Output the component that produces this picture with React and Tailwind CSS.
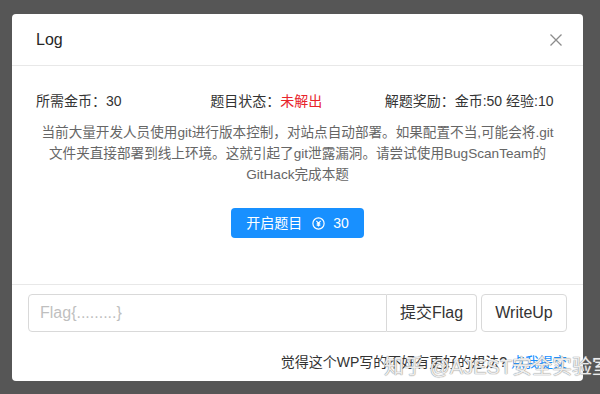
import { useState } from 'react';

const FONT = "font-['Liberation_Sans','Noto_Sans_CJK_SC',sans-serif]";

function CloseIcon() {
  return (
    <svg width="12" height="12" viewBox="0 0 12 12" fill="none">
      <path d="M0.5 0.5L11.5 11.5M11.5 0.5L0.5 11.5" stroke="#8c8c8c" strokeWidth="1.3" />
    </svg>
  );
}

// Coin icon: a circle with a yen sign inside
function CoinIcon() {
  return (
    <svg width="13" height="13" viewBox="0 0 13 13" fill="none">
      <circle cx="6.5" cy="6.5" r="5.6" stroke="white" strokeWidth="1.2" />
      <path
        d="M4.4 3.8L6.5 6.4L8.6 3.8M6.5 6.4V9.6M4.7 6.9H8.3M4.7 8.2H8.3"
        stroke="white"
        strokeWidth="1.1"
      />
    </svg>
  );
}

export default function App() {
  const [flag, setFlag] = useState('');

  return (
    <div className={`relative w-[600px] h-[394px] overflow-hidden bg-[#565656] pt-[14px] ${FONT}`}>
      <div className="ml-[12px] w-[571px] bg-white rounded-[4px]">
        {/* Header */}
        <div className="h-[52px] border-b border-[#e8e8e8] px-6 flex items-center justify-between">
          <span className="text-[16px] font-medium text-[#262626]">Log</span>
          <button className="mr-[-3px] flex items-center">
            <CloseIcon />
          </button>
        </div>

        {/* Body */}
        <div className="px-6 pt-6 pb-[46px]">
          <div className="grid grid-cols-3 text-[14px] leading-[22px] text-[#333]">
            <span>所需金币：30</span>
            <span>
              题目状态：<span className="text-[#e8242b]">未解出</span>
            </span>
            <span>解题奖励：金币:50 经验:10</span>
          </div>
          <p className="mt-[10px] text-center text-[13.6px] leading-[21px] text-[#666] whitespace-nowrap">
            当前大量开发人员使用git进行版本控制，对站点自动部署。如果配置不当,可能会将.git
            <br />
            文件夹直接部署到线上环境。这就引起了git泄露漏洞。请尝试使用BugScanTeam的
            <br />
            GitHack完成本题
          </p>
          <div className="mt-[23px] flex justify-center">
            <button className="h-[30px] px-[15px] rounded-[4px] bg-[#1890ff] text-white text-[14px] flex items-center">
              <span>开启题目</span>
              <span className="ml-[10px] flex items-center">
                <CoinIcon />
              </span>
              <span className="ml-[8px]">30</span>
            </button>
          </div>
        </div>

        {/* Footer */}
        <div className="border-t border-[#e8e8e8] px-4 pt-[9px] pb-[8px]">
          <div className="flex h-[38px]">
            <input
              value={flag}
              onChange={(e) => setFlag(e.target.value)}
              placeholder="Flag{.........}"
              className="flex-1 min-w-0 h-full border border-[#d9d9d9] rounded-l-[4px] px-[11px] text-[16px] text-[#333] placeholder:text-[#bfbfbf] outline-none"
            />
            <button className="w-[90px] h-full border border-l-0 border-[#d9d9d9] rounded-r-[4px] text-[16px] text-[#333]">
              提交Flag
            </button>
            <button className="ml-[4px] w-[86px] h-full border border-[#d9d9d9] rounded-[4px] text-[16px] text-[#333]">
              WriteUp
            </button>
          </div>
          <div className="mt-[19px] text-right text-[14px] leading-[22px] text-[#333]">
            觉得这个WP写的不好有更好的想法? <span className="text-[#1890ff]">点我提交</span>
          </div>
        </div>
      </div>

      {/* Image watermark */}
      <div className="absolute left-[384px] top-[354px] text-[20px] leading-[26px] whitespace-nowrap text-white/85 [text-shadow:0_0_1px_#888,0_0_1px_#888] pointer-events-none">
        知乎 @AJEST安全实验室
      </div>
    </div>
  );
}
